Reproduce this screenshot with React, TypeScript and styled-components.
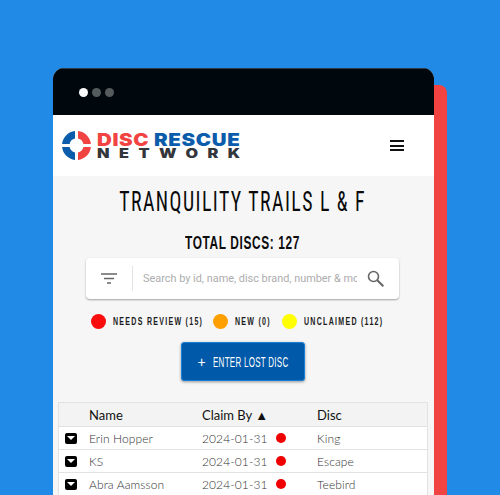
import * as React from "react";
import styled, { createGlobalStyle } from "styled-components";

const GlobalStyle = createGlobalStyle`
  html, body {
    margin: 0;
    padding: 0;
    height: 495px;
    overflow: hidden;
    background: #208ae6;
  }
`;

const Stage = styled.div`
  width: 500px;
  height: 495px;
  padding: 68px 0 0 53px;
  box-sizing: border-box;
  overflow: hidden;
  display: flex;
  align-items: flex-start;
`;

const Phone = styled.div`
  width: 381px;
  flex: none;
  background: #f6f6f6;
  border-radius: 11px 11px 0 0;
  overflow: hidden;
`;

const RedEdge = styled.div`
  width: 13px;
  height: 420px;
  margin-top: 17px;
  flex: none;
  background: #f24343;
  border-radius: 0 8px 0 0;
`;

const TopBar = styled.div`
  height: 47px;
  background: #00080e;
  border-top: 1px solid #2c3a4a;
  display: flex;
  align-items: center;
  gap: 4px;
  padding: 0 0 0 26px;
  box-sizing: border-box;
`;

const Dot = styled.span<{ $on?: boolean }>`
  width: 9px;
  height: 9px;
  border-radius: 50%;
  background: ${(p) => (p.$on ? "#fafafa" : "#555a5d")};
`;

const Header = styled.div`
  height: 61px;
  background: #fff;
  display: flex;
  align-items: center;
  justify-content: space-between;
  padding: 0 30px 0 9px;
`;

const Logo = styled.div`
  display: flex;
  align-items: center;
  gap: 6px;
`;

const LogoText = styled.div`
  width: 143px;
  display: flex;
  flex-direction: column;
  font-family: "Inter", "Liberation Sans", sans-serif;
  font-weight: 900;
`;

const LogoTop = styled.div`
  font-size: 17.5px;
  line-height: 16px;
  letter-spacing: 0.55px;
  white-space: nowrap;
  color: #f24343;
  transform: scaleX(1.17);
  transform-origin: left center;
`;

const LogoBlue = styled.span`
  color: #0b5cab;
`;

const LogoBottom = styled.div`
  font-size: 12.5px;
  line-height: 11px;
  letter-spacing: 7.3px;
  white-space: nowrap;
  color: #33363a;
  transform: scaleX(1.3);
  transform-origin: left center;
`;

const Burger = styled.div`
  width: 14px;
  display: flex;
  flex-direction: column;
  gap: 2.5px;
`;

const BurgerLine = styled.span`
  height: 2px;
  background: #111;
`;

const Content = styled.div`
  display: flex;
  flex-direction: column;
  align-items: center;
  padding-right: 1px;
`;

const Title = styled.h1`
  margin: 11px 0 0;
  font-family: "Roboto Condensed", "Liberation Sans", sans-serif;
  font-weight: 400;
  font-size: 28.5px;
  line-height: 30px;
  letter-spacing: 2.1px;
  color: #0a0a0a;
  white-space: nowrap;
  transform: scaleX(0.695);
`;

const Total = styled.div`
  margin-top: 17px;
  font-family: "Liberation Sans", sans-serif;
  font-weight: 700;
  font-size: 17.5px;
  line-height: 18px;
  letter-spacing: 0.9px;
  color: #0d0d0d;
  white-space: nowrap;
  transform: scaleX(0.68);
`;

const SearchBox = styled.div`
  margin: 6px 1px 0 0;
  width: 313px;
  height: 41px;
  background: #fff;
  border-radius: 4px;
  box-shadow: 0 1px 2px rgba(0, 0, 0, 0.35);
  display: flex;
  align-items: center;
  box-sizing: border-box;
  padding: 0 14px 0 15px;
`;

const Divider = styled.span`
  width: 1px;
  height: 25px;
  flex: none;
  background: #e4e4e4;
  margin: 0 10px 0 15px;
`;

const Placeholder = styled.span`
  width: 214px;
  margin-right: 10px;
  flex: none;
  overflow: hidden;
  white-space: nowrap;
  font-family: "Roboto", sans-serif;
  font-size: 10.9px;
  color: #adadad;
`;

const Legend = styled.div`
  margin: 14px 0 0 38px;
  height: 16px;
  align-self: flex-start;
  display: flex;
  align-items: center;
  gap: 10px;
`;

const LegendItem = styled.div`
  display: flex;
  align-items: center;
  gap: 7px;
`;

const LegendLabel = styled.span<{ $w: number }>`
  width: ${(p) => p.$w}px;
  font-family: "Liberation Sans", sans-serif;
  font-weight: 700;
  font-size: 11px;
  letter-spacing: 2px;
  color: #1c1c1c;
  white-space: nowrap;
  transform: scaleX(0.64);
  transform-origin: left center;
`;

const LegendDot = styled.span<{ $color: string }>`
  width: 15px;
  height: 15px;
  border-radius: 50%;
  background: ${(p) => p.$color};
`;

const EnterButton = styled.div`
  margin-top: 13px;
  width: 124px;
  height: 39px;
  box-sizing: border-box;
  background: #0059a9;
  border: 1px solid #1a7fd6;
  border-radius: 3px;
  box-shadow: 0 1px 3px rgba(0, 0, 0, 0.4);
  color: #fff;
  display: flex;
  align-items: center;
  justify-content: center;
  gap: 7px;
  font-family: "Liberation Sans", sans-serif;
  font-size: 14px;
`;

const ButtonLabel = styled.span`
  display: inline-block;
  width: 76px;
  white-space: nowrap;
  letter-spacing: 0.5px;
  transform: scaleX(0.57);
  transform-origin: left center;
`;

const Table = styled.table`
  margin-top: 21px;
  width: 368px;
  table-layout: fixed;
  border-collapse: collapse;
  font-family: "Lato", sans-serif;
  font-size: 13px;
  background: #fff;
`;

const Th = styled.th<{ $w: number }>`
  width: ${(p) => p.$w}px;
  height: 23px;
  padding: 0;
  background: #f3f3f3;
  border-top: 1px solid #e2e2e2;
  border-bottom: 1px solid #e2e2e2;
  font-weight: 400;
  text-align: left;
  color: #111;
  &:first-child { border-left: 1px solid #e2e2e2; }
  &:last-child { border-right: 1px solid #e2e2e2; }
`;

const Td = styled.td`
  height: 22px;
  padding: 0;
  border-bottom: 1px solid #e2e2e2;
  color: #333;
  font-weight: 300;
  font-size: 12px;
  letter-spacing: 0.1px;
  &:first-child { border-left: 1px solid #e2e2e2; }
  &:last-child { border-right: 1px solid #e2e2e2; }
`;

const DateCell = styled.div`
  display: flex;
  align-items: center;
  gap: 8px;
`;

const StatusDot = styled.span`
  width: 10px;
  height: 10px;
  border-radius: 50%;
  background: #f00000;
`;

const Expand = styled.span`
  display: flex;
  width: 12px;
  height: 11px;
  margin-left: 6px;
  background: #000;
  border-radius: 2px;
  align-items: center;
  justify-content: center;
`;

const Arrow = styled.span`
  width: 0;
  height: 0;
  border-left: 4px solid transparent;
  border-right: 4px solid transparent;
  border-top: 4px solid #fff;
`;

const RingLogo = () => (
  <svg width="29" height="29" viewBox="0 0 29 29">
    <path d="M13 .1A14.4 14.4 0 0 0 .1 13H7.6A7 7 0 0 1 13 7.6z" fill="#0b5cab" />
    <path d="M16 .1A14.4 14.4 0 0 1 28.9 13H21.4A7 7 0 0 0 16 7.6z" fill="#f24343" />
    <path d="M.1 16A14.4 14.4 0 0 0 13 28.9V21.4A7 7 0 0 1 7.6 16z" fill="#0b5cab" />
    <path d="M28.9 16A14.4 14.4 0 0 1 16 28.9V21.4A7 7 0 0 0 21.4 16z" fill="#f24343" />
  </svg>
);

const FilterIcon = () => (
  <svg width="16" height="11" viewBox="0 0 16 11" style={{ flex: "none" }}>
    <path d="M0 1h16M3 5.5h10M6 10h4" stroke="#666" strokeWidth="1.5" fill="none" />
  </svg>
);

const SearchIcon = () => (
  <svg width="17" height="17" viewBox="0 0 17 17" style={{ flex: "none" }}>
    <circle cx="6.5" cy="6.5" r="5" stroke="#666" strokeWidth="1.6" fill="none" />
    <path d="M10.3 10.3l6 6" stroke="#666" strokeWidth="2" fill="none" />
  </svg>
);

const rows = [
  { name: "Erin Hopper", disc: "King" },
  { name: "KS", disc: "Escape" },
  { name: "Abra Aamsson", disc: "Teebird" },
];

export default function App() {
  return (
    <Stage>
      <GlobalStyle />
      <Phone>
        <TopBar>
          <Dot $on />
          <Dot />
          <Dot />
        </TopBar>
        <Header>
          <Logo>
            <RingLogo />
            <LogoText>
              <LogoTop>
                DISC <LogoBlue>RESCUE</LogoBlue>
              </LogoTop>
              <LogoBottom>NETWORK</LogoBottom>
            </LogoText>
          </Logo>
          <Burger>
            <BurgerLine />
            <BurgerLine />
            <BurgerLine />
          </Burger>
        </Header>
        <Content>
          <Title>TRANQUILITY TRAILS L &amp; F</Title>
          <Total>TOTAL DISCS: 127</Total>
          <SearchBox>
            <FilterIcon />
            <Divider />
            <Placeholder>Search by id, name, disc brand, number &amp; more</Placeholder>
            <SearchIcon />
          </SearchBox>
          <Legend>
            <LegendItem>
              <LegendDot $color="#f90d0d" />
              <LegendLabel $w={90}>NEEDS REVIEW (15)</LegendLabel>
            </LegendItem>
            <LegendItem>
              <LegendDot $color="#ff9f00" />
              <LegendLabel $w={37}>NEW (0)</LegendLabel>
            </LegendItem>
            <LegendItem>
              <LegendDot $color="#ffff00" />
              <LegendLabel $w={79}>UNCLAIMED (112)</LegendLabel>
            </LegendItem>
          </Legend>
          <EnterButton>
            <span>+</span>
            <ButtonLabel>ENTER LOST DISC</ButtonLabel>
          </EnterButton>
          <Table>
            <thead>
              <tr>
                <Th $w={30} />
                <Th $w={113}>Name</Th>
                <Th $w={115}>Claim By ▲</Th>
                <Th $w={110}>Disc</Th>
              </tr>
            </thead>
            <tbody>
              {rows.map((r) => (
                <tr key={r.name}>
                  <Td>
                    <Expand>
                      <Arrow />
                    </Expand>
                  </Td>
                  <Td>{r.name}</Td>
                  <Td>
                    <DateCell>
                      2024-01-31
                      <StatusDot />
                    </DateCell>
                  </Td>
                  <Td>{r.disc}</Td>
                </tr>
              ))}
            </tbody>
          </Table>
        </Content>
      </Phone>
      <RedEdge />
    </Stage>
  );
}
